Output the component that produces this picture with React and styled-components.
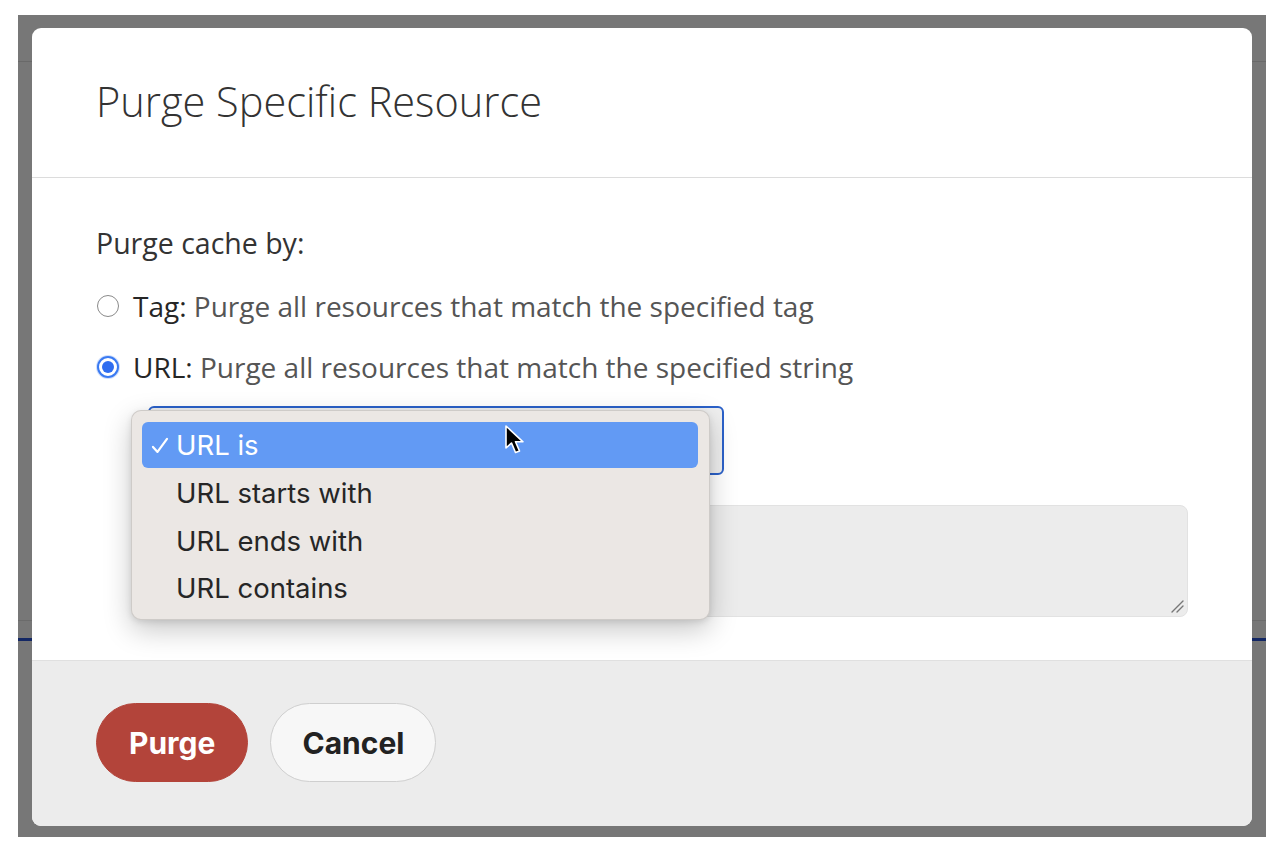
import React from "react";
import styled, { createGlobalStyle } from "styled-components";

const Global = createGlobalStyle`
  html, body { margin: 0; padding: 0; background: #ffffff; }
  body { font-family: "Open Sans", "Noto Sans", sans-serif; }
  * { box-sizing: border-box; }
`;

const Frame = styled.div`
  position: relative;
  width: 1248px;
  height: 822px;
  margin: 15px 0 0 18px;
  overflow: hidden;
  background: #ffffff;
`;

const PageBehind = styled.div`
  display: flex;
  flex-direction: column;
  height: 100%;
`;

const PageHeaderBand = styled.div`
  height: 47px;
  border-bottom: 1px solid #e2e2e2;
`;

const PageSpacer = styled.div`
  height: 559px;
  border-bottom: 1px solid #e6e6e6;
`;

const PageRule = styled.div`
  margin-top: 17px;
  height: 3px;
  background: #2a55d6;
`;

const Backdrop = styled.div`
  position: absolute;
  inset: 0;
  background: rgba(0, 0, 0, 0.533);
  padding: 13px 14px 11px 14px;
  display: flex;
`;

const Modal = styled.div`
  flex: 1;
  background: #ffffff;
  border-radius: 9px;
  display: flex;
  flex-direction: column;
  overflow: hidden;
`;

const Header = styled.div`
  height: 150px;
  border-bottom: 1px solid #dcdcdc;
  display: flex;
  align-items: center;
  padding: 0 64px 4px;
`;

const Title = styled.h2`
  margin: 0;
  font-family: "Open Sans", sans-serif;
  font-weight: 300;
  font-size: 41.5px;
  color: #333333;
  letter-spacing: 0;
`;

const Body = styled.div`
  flex: 1;
  padding: 47px 64px 43px;
  display: flex;
  flex-direction: column;
`;

const FieldLabel = styled.div`
  font-size: 28.5px;
  line-height: 36px;
  color: #333333;
  margin-bottom: 27px;
`;

const RadioRow = styled.label`
  display: flex;
  align-items: center;
  gap: 14px;
  font-size: 28px;
  line-height: 36px;
  color: #555555;
  margin-bottom: ${(p) => p.$mb || 0}px;
  padding-left: 1px;
`;

const Radio = styled.span`
  width: 22px;
  height: 22px;
  border-radius: 50%;
  flex: none;
  display: flex;
  align-items: center;
  justify-content: center;
  background: #ffffff;
  border: ${(p) => (p.$checked ? "2px solid #3a7af2" : "1.5px solid #8a8a8a")};
  box-shadow: ${(p) => (p.$checked ? "0 0 0 1px rgba(58,122,242,0.25)" : "none")};
  &::after {
    content: "";
    display: ${(p) => (p.$checked ? "block" : "none")};
    width: 12px;
    height: 12px;
    border-radius: 50%;
    background: #2f6df0;
  }
`;

const RadioKey = styled.strong`
  font-weight: 500;
  color: #262626;
`;

const SelectWrap = styled.div`
  position: relative;
  margin: 21px 0 0 52px;
  width: 576px;
`;

const SelectBox = styled.div`
  height: 69px;
  border: 2px solid #2b61c9;
  border-radius: 6px;
  background: #efefef;
`;

const Menu = styled.ul`
  position: absolute;
  left: -17px;
  top: 4px;
  width: 579px;
  height: 210px;
  margin: 0;
  padding: 11px 11px 0 10px;
  list-style: none;
  background: #ebe7e4;
  border: 1px solid rgba(0, 0, 0, 0.12);
  border-radius: 10px;
  box-shadow: 0 10px 28px rgba(0, 0, 0, 0.22), 0 2px 6px rgba(0, 0, 0, 0.1);
  z-index: 5;
  font-family: Inter, "Liberation Sans", sans-serif;
`;

const MenuItem = styled.li`
  position: relative;
  height: ${(p) => (p.$active ? 46 : 47.5)}px;
  margin-bottom: ${(p) => (p.$active ? 1.5 : 0)}px;
  display: flex;
  align-items: center;
  padding-left: 34px;
  border-radius: 6px;
  font-size: 27.5px;
  color: ${(p) => (p.$active ? "#ffffff" : "#262626")};
  background: ${(p) => (p.$active ? "#629af4" : "transparent")};
`;

const Check = styled.svg`
  position: absolute;
  left: 9px;
  top: 50%;
  width: 18px;
  height: 18px;
  transform: translateY(-45%);
`;

const Cursor = styled.svg`
  position: absolute;
  left: 372px;
  top: 13px;
  width: 22px;
  height: 32px;
`;

const TextArea = styled.div`
  position: relative;
  margin: 30px 0 0 52px;
  height: 112px;
  background: #ececec;
  border: 1px solid #e2e2e2;
  border-radius: 8px;
`;

const Grip = styled.svg`
  position: absolute;
  right: 3px;
  bottom: 3px;
  width: 14px;
  height: 14px;
`;

const Footer = styled.div`
  height: 166px;
  flex: none;
  background: #ececec;
  border-top: 1px solid #e0e0e0;
  display: flex;
  align-items: center;
  gap: 22px;
  padding: 0 64px 2px;
`;

const Button = styled.button`
  height: 79px;
  padding: 0 ${(p) => (p.$primary ? 32 : 31)}px;
  border-radius: 40px;
  font-family: Inter, "Liberation Sans", sans-serif;
  font-weight: 700;
  font-size: 30px;
  cursor: pointer;
  color: ${(p) => (p.$primary ? "#ffffff" : "#222222")};
  background: ${(p) => (p.$primary ? "#b3443a" : "#f7f7f7")};
  border: ${(p) => (p.$primary ? "1px solid #b3443a" : "1px solid #cfcfcf")};
`;

const options = ["URL is", "URL starts with", "URL ends with", "URL contains"];

export default function App() {
  return (
    <>
      <Global />
      <Frame>
        <PageBehind>
          <PageHeaderBand />
          <PageSpacer />
          <PageRule />
        </PageBehind>
        <Backdrop>
          <Modal>
            <Header>
              <Title>Purge Specific Resource</Title>
            </Header>
            <Body>
              <FieldLabel>Purge cache by:</FieldLabel>
              <RadioRow $mb={25}>
                <Radio />
                <span>
                  <RadioKey>Tag:</RadioKey> Purge all resources that match the specified tag
                </span>
              </RadioRow>
              <RadioRow>
                <Radio $checked />
                <span>
                  <RadioKey>URL:</RadioKey> Purge all resources that match the specified string
                </span>
              </RadioRow>
              <SelectWrap>
                <SelectBox />
                <Menu>
                  {options.map((o, i) => (
                    <MenuItem key={o} $active={i === 0}>
                      {i === 0 && (
                        <Check viewBox="0 0 18 18">
                          <path
                            d="M2 10 L6.5 15 L16 2"
                            fill="none"
                            stroke="#fff"
                            strokeWidth="2.2"
                            strokeLinecap="round"
                            strokeLinejoin="round"
                          />
                        </Check>
                      )}
                      {o}
                    </MenuItem>
                  ))}
                  <Cursor viewBox="0 0 22 32">
                    <path
                      d="M2 2 L2 24 L7.5 19 L11.5 28.5 L15.5 27 L11.5 17.8 L19 17.8 Z"
                      fill="#000"
                      stroke="#fff"
                      strokeWidth="1.6"
                      strokeLinejoin="round"
                    />
                  </Cursor>
                </Menu>
              </SelectWrap>
              <TextArea>
                <Grip viewBox="0 0 14 14">
                  <path d="M2 13 L13 2 M7 13 L13 7" stroke="#777" strokeWidth="1.4" strokeLinecap="round" />
                </Grip>
              </TextArea>
            </Body>
            <Footer>
              <Button $primary>Purge</Button>
              <Button>Cancel</Button>
            </Footer>
          </Modal>
        </Backdrop>
      </Frame>
    </>
  );
}
